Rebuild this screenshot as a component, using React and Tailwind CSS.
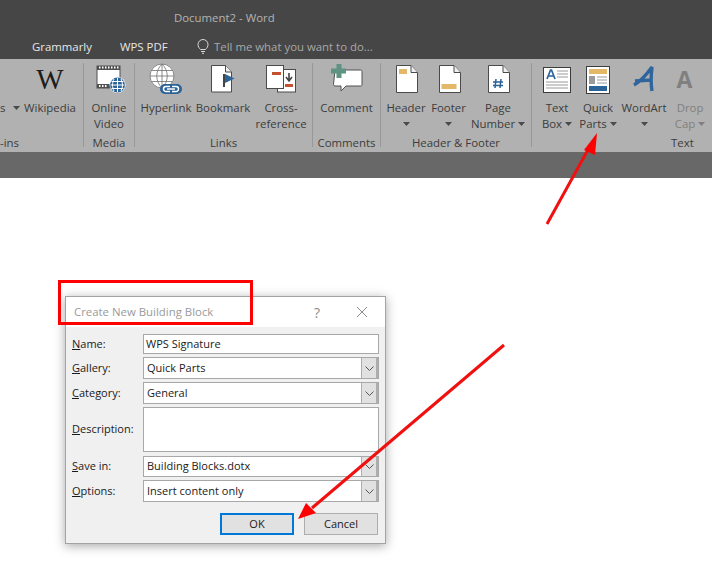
import React from "react";

const Caret = ({ c = "#4a4a4a" }) => (
  <svg width="7" height="4" viewBox="0 0 7 4" className="inline-block"><path d="M0 0h7L3.500 4z" fill={c} /></svg>
);

const Page = ({ children }) => (
  <svg width="30" height="30" viewBox="0 0 30 30">
    <path d="M5.500 1.500H20l6.500 7v20H5.500z" fill="#fff" stroke="#4a4a4a" />
    <path d="M20 1.500v7h6.500" fill="#eee" stroke="#4a4a4a" />
    {children}
  </svg>
);

const icons = {
  wiki: <div className="font-['Liberation_Serif',serif] text-[29px] leading-[28px] text-[#1c1c1c] h-[28px]">W</div>,
  video: (
    <svg width="30" height="30" viewBox="0 0 30 30" className="ml-[3px]">
      <rect x="1" y="2" width="23" height="22" fill="#fff" stroke="#505050" />
      <rect x="1" y="2" width="23" height="4" fill="#505050" />
      <rect x="1" y="20" width="23" height="4" fill="#505050" />
      <path d="M3 3.500h1.500M6 3.500h1.500M9 3.500h1.500M12 3.500h1.500M15 3.500h1.500M18 3.500h1.500M21 3.500h1.500M3 22h1.500M6 22h1.500M9 22h1.500" stroke="#fff" strokeWidth="2" />
      <circle cx="21.500" cy="21" r="8" fill="#fff" />
      <circle cx="21.500" cy="21" r="7.500" fill="#2b6399" />
      <path d="M14.500 21h14M15.500 17.500h12M15.500 24.500h12M21.500 14v14M18 15c-2 4-2 8 0 12M25 15c2 4 2 8 0 12" stroke="#fff" strokeWidth="1" fill="none" />
    </svg>
  ),
  link: (
    <svg width="34" height="32" viewBox="0 0 34 32">
      <circle cx="13" cy="13" r="12" fill="#fff" stroke="#8a8a8a" />
      <path d="M1 13h24M2.500 7.500h21M2.500 18.500h21M13 1v24M13 1c-7 7-7 17 0 24M13 1c7 7 7 17 0 24" stroke="#6e6e6e" strokeWidth="0.800" fill="none" />
      <rect x="11" y="21" width="22" height="10" rx="5" fill="#2b6399" />
      <path d="M21 23.500h-4a2.500 2.500 0 0 0 0 5h4M23 23.500h4a2.500 2.500 0 0 1 0 5h-4M18 26h8" stroke="#fff" strokeWidth="1.500" fill="none" />
    </svg>
  ),
  bookmark: (
    <svg width="26" height="30" viewBox="0 0 26 30">
      <path d="M1.500 1.500H15.500l6 6.500v20H1.500z" fill="#fff" stroke="#4a4a4a" />
      <path d="M15.500 1.500v6.500h6" fill="#eee" stroke="#4a4a4a" />
      <rect x="13" y="10" width="2" height="13" fill="#444" />
      <path d="M15 10l9.500 4.500L15 19z" fill="#2b6399" />
    </svg>
  ),
  cross: (
    <svg width="32" height="30" viewBox="0 0 32 30">
      <rect x="12.500" y="5.500" width="18" height="22.500" fill="#fff" stroke="#4a4a4a" />
      <rect x="1.500" y="1.500" width="17" height="23" fill="#fff" stroke="#4a4a4a" />
      <rect x="7" y="8" width="9" height="3" fill="#c2512e" />
      <rect x="20" y="20" width="8" height="3" fill="#c2512e" />
      <path d="M24 9v7M21 13l3 4 3-4" stroke="#444" strokeWidth="1.600" fill="none" />
    </svg>
  ),
  comment: (
    <svg width="32" height="30" viewBox="0 0 32 30">
      <path d="M4 6h25.500a1.500 1.500 0 0 1 1.500 1.500v13a1.500 1.500 0 0 1-1.500 1.500H15l-5 5v-5H4a1.500 1.500 0 0 1-1.500-1.500z" fill="#fff" stroke="#505050" />
      <path d="M5.500 0h5v4.500H15v5h-4.500V14h-5V9.500H0v-5h5.500z" fill="#5e9282" />
    </svg>
  ),
  header: <Page><rect x="8" y="5" width="8" height="5" fill="#e3b866" /></Page>,
  footer: <Page><rect x="7.500" y="20" width="15" height="5" fill="#e3b866" /></Page>,
  number: (
    <Page>
      <path d="M13 15l-1 9M18 15l-1 9M10 18h10M10 21.500h10" stroke="#2b6399" strokeWidth="1.500" fill="none" />
    </Page>
  ),
  textbox: (
    <svg width="30" height="28" viewBox="0 0 30 28" className="mt-[1px]">
      <rect x="1.500" y="1.500" width="27" height="25" fill="#fff" stroke="#3c3c3c" />
      <path d="M5 13L8.500 4h1L13 13M6.500 10h5" stroke="#2b6399" strokeWidth="1.700" fill="none" />
      <path d="M15 5h11M15 8h11M15 11h11M4 16h22M4 19h22M4 22h22" stroke="#9a9a9a" strokeWidth="1" />
    </svg>
  ),
  quick: (
    <svg width="24" height="28" viewBox="0 0 24 28" className="mt-[1px]">
      <rect x="0.500" y="0.500" width="23" height="27" fill="#fff" stroke="#3c3c3c" />
      <rect x="3" y="3" width="18" height="5" fill="#e3b866" />
      <rect x="3" y="10" width="6" height="8" fill="#9a9a9a" />
      <path d="M11 11h10M11 14h10M11 17h10" stroke="#9a9a9a" />
      <rect x="3" y="20" width="18" height="5" fill="#2b6399" />
    </svg>
  ),
  wordart: (
    <svg width="24" height="28" viewBox="0 0 24 28">
      <path d="M2 20C9 16 15 9 20 2 C19 10 19 20 20 26M3 16l16-1" stroke="#2f659c" strokeWidth="3.400" fill="none" />
    </svg>
  ),
  drop: <div className="font-['Open_Sans',sans-serif] font-bold text-[23px] leading-[28px] text-[#808080] h-[28px] -ml-[11px]">A</div>,
};

const Item = ({ w, icon, a, b, caret, muted }) => (
  <div className="flex flex-col items-center shrink-0" style={{ width: w }}>
    <div className="h-[32px] flex items-center justify-center">{icons[icon]}</div>
    <div className={`mt-[5px] leading-[16px] whitespace-nowrap ${muted ? "text-[#808080]" : ""}`}>{a}</div>
    <div className={`leading-[16px] whitespace-nowrap flex items-center justify-center gap-[3px] h-[16px] ${muted ? "text-[#808080]" : ""}`}>
      {b}
      {caret && <Caret c={muted ? "#808080" : "#4a4a4a"} />}
    </div>
  </div>
);

const Group = ({ w, label, labelClass = "text-center", border = true, children, itemsClass = "" }) => (
  <div className={`shrink-0 flex flex-col h-[84px] ${border ? "border-r border-[#989898]" : ""}`} style={{ width: w }}>
    <div className={`flex h-[72px] shrink-0 ${itemsClass}`}>{children}</div>
    <div className={`leading-[16px] shrink-0 ${labelClass}`}>{label}</div>
  </div>
);

const Row = ({ u, rest, children, h = "h-[22px]", mt = "" }) => (
  <div className={`flex items-center ${h} ${mt}`}>
    <div className="w-[77px] shrink-0 pl-[6px]">
      <span className="underline">{u}</span>{rest}
    </div>
    {children}
  </div>
);

const Select = ({ value }) => (
  <div className="w-[236px] h-full flex border border-[#a8a8a8] bg-white">
    <div className="flex-1 pl-[3px] flex items-center">{value}</div>
    <div className="w-[17px] bg-[#e1e1e1] border-l border-r-2 border-[#adadad] flex items-center justify-center">
      <svg width="9" height="5" viewBox="0 0 9 5"><path d="M0.500 0.500L4.500 4.500L8.500 0.500" stroke="#555" fill="none" /></svg>
    </div>
  </div>
);

export default function App() {
  return (
    <div className="relative w-[712px] h-[579px] overflow-hidden bg-white font-['Open_Sans',sans-serif] text-[11.4px] text-[#3c3c3c]">
      <div className="h-[59px] bg-[#464646] overflow-hidden">
        <div className="pl-[174px] pt-[9px] leading-[17px] text-[#b4b4b4]">Document2 - Word</div>
        <div className="flex items-center mt-[12px] h-[17px] text-[#e6e6e6]">
          <span className="w-[32px]"></span>
          <span className="w-[88px]">Grammarly</span>
          <span className="w-[77px]">WPS PDF</span>
          <svg width="12" height="15" viewBox="0 0 12 15" className="mr-[5px]">
            <path d="M3.500 10.500C2 9 1 7.500 1 5.500a5 5 0 0 1 10 0c0 2-1 3.500-2.500 5zM4 12.500h4M5 14.300h2" stroke="#d8d8d8" fill="none" />
          </svg>
          <span className="text-[#a8a8a8]">Tell me what you want to do...</span>
        </div>
      </div>

      <div className="h-[93px] bg-[#b1b1b1] flex pt-[4px]">
        <Group w={84} label="-ins" labelClass="text-left">
          <div className="w-[24px] shrink-0 pt-[37px] leading-[16px] flex items-center gap-[8px] h-[53px]">
            <span>s</span><Caret />
          </div>
          <div className="ml-[-1px]"><Item w={54} icon="wiki" a="Wikipedia" /></div>
        </Group>
        <Group w={51} label="Media">
          <Item w={50} icon="video" a="Online" b="Video" />
        </Group>
        <Group w={178} label="Links" itemsClass="pl-[3px]">
          <Item w={56} icon="link" a="Hyperlink" />
          <Item w={58} icon="bookmark" a="Bookmark" />
          <Item w={58} icon="cross" a="Cross-" b="reference" />
        </Group>
        <Group w={68} label="Comments">
          <Item w={67} icon="comment" a="Comment" />
        </Group>
        <Group w={151} label="Header & Footer" itemsClass="pl-[3px]">
          <Item w={44} icon="header" a="Header" b="" caret />
          <Item w={41} icon="footer" a="Footer" b="" caret />
          <Item w={58} icon="number" a="Page" b="Number" caret />
        </Group>
        <Group w={180} label="Text" labelClass="pl-[139px]" border={false} itemsClass="pl-[7px]">
          <Item w={36} icon="textbox" a="Text" b="Box" caret />
          <Item w={46} icon="quick" a="Quick" b="Parts" caret />
          <Item w={46} icon="wordart" a="WordArt" b="" caret />
          <Item w={46} icon="drop" a="Drop" b="Cap" caret muted />
        </Group>
      </div>

      <div className="h-[26px] bg-[#686868]"></div>

      {/* dialog */}
      <div className="absolute left-[65px] top-[296px] w-[321px] h-[248px] border border-[#a3a3a3] bg-[#f0f0f0] shadow-[0_2px_10px_rgba(0,0,0,0.35)] text-[11px] text-[#1a1a1a] flex flex-col">
        <div className="h-[30px] bg-white flex items-center pl-[8px] text-[11.4px] text-[#9a9a9a] shrink-0">
          <span className="flex-1">Create New Building Block</span>
          <span className="w-[12px] mr-[33px] text-[14px] text-[#8a8a8a] text-center">?</span>
          <svg width="12" height="12" viewBox="0 0 12 12" className="mr-[17px]"><path d="M1 1l10 10M11 1L1 11" stroke="#8a8a8a" /></svg>
        </div>
        <div className="flex flex-col gap-[3px] pt-[7px]">
          <Row u="N" rest="ame:" h="h-[20px]">
            <div className="w-[236px] h-full border border-[#a8a8a8] bg-white pl-[2px] flex items-center">WPS Signature</div>
          </Row>
          <Row u="G" rest="allery:"><Select value="Quick Parts" /></Row>
          <Row u="C" rest="ategory:"><Select value="General" /></Row>
          <Row u="D" rest="escription:" h="h-[45px]">
            <div className="w-[236px] h-full border border-[#a8a8a8] bg-white"></div>
          </Row>
          <Row u="S" rest="ave in:" h="h-[21px]" mt="mt-[1px]"><Select value="Building Blocks.dotx" /></Row>
          <Row u="O" rest="ptions:"><Select value="Insert content only" /></Row>
        </div>
        <div className="flex pl-[154px] gap-[10px] mt-[11px]">
          <div className="w-[74px] h-[22px] border-2 border-[#0078d7] bg-[#e1e1e1] flex items-center justify-center">OK</div>
          <div className="w-[74px] h-[22px] border border-[#adadad] bg-[#e1e1e1] flex items-center justify-center">Cancel</div>
        </div>
      </div>

      {/* annotations */}
      <div className="absolute left-[58px] top-[280px] w-[195px] h-[45px] border-[3px] border-[#ff0000] pointer-events-none"></div>
      <svg className="absolute left-0 top-0 pointer-events-none" width="712" height="579" viewBox="0 0 712 579">
        <path d="M547 224L590 146" stroke="#f01010" strokeWidth="3" fill="none" />
        <path d="M597 133L584 150L595 155z" fill="#ff0000" />
        <path d="M504 345L312 508" stroke="#f01010" strokeWidth="3" fill="none" />
        <path d="M298 519L306 503L316 513z" fill="#ff0000" />
      </svg>
    </div>
  );
}
